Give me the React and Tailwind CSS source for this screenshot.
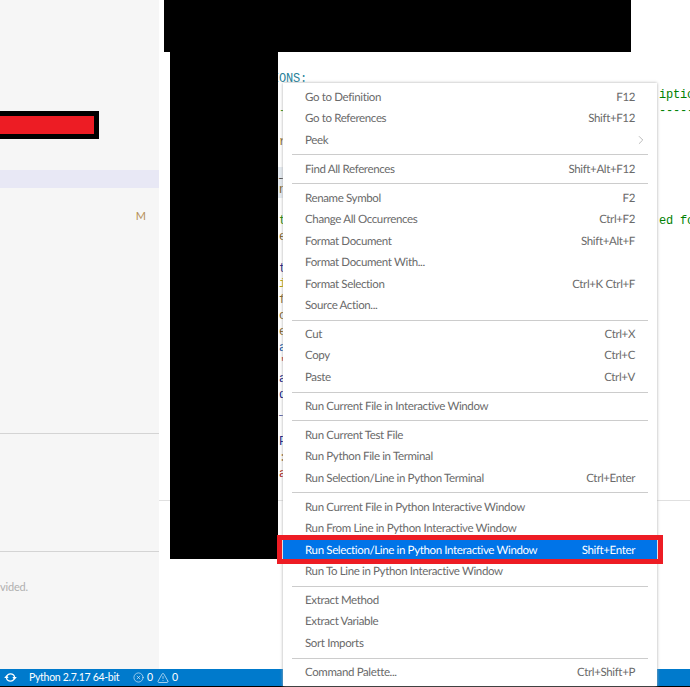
import { ChevronRight, CircleX, TriangleAlert } from 'lucide-react';

const menuGroups = [
  [
    { label: 'Go to Definition', keys: 'F12' },
    { label: 'Go to References', keys: 'Shift+F12' },
    { label: 'Peek', submenu: true },
  ],
  [{ label: 'Find All References', keys: 'Shift+Alt+F12' }],
  [
    { label: 'Rename Symbol', keys: 'F2' },
    { label: 'Change All Occurrences', keys: 'Ctrl+F2' },
    { label: 'Format Document', keys: 'Shift+Alt+F' },
    { label: 'Format Document With...' },
    { label: 'Format Selection', keys: 'Ctrl+K Ctrl+F' },
    { label: 'Source Action...' },
  ],
  [
    { label: 'Cut', keys: 'Ctrl+X' },
    { label: 'Copy', keys: 'Ctrl+C' },
    { label: 'Paste', keys: 'Ctrl+V' },
  ],
  [{ label: 'Run Current File in Interactive Window' }],
  [
    { label: 'Run Current Test File' },
    { label: 'Run Python File in Terminal' },
    { label: 'Run Selection/Line in Python Terminal', keys: 'Ctrl+Enter' },
  ],
  [
    { label: 'Run Current File in Python Interactive Window' },
    { label: 'Run From Line in Python Interactive Window' },
    { label: 'Run Selection/Line in Python Interactive Window', keys: 'Shift+Enter', active: true },
    { label: 'Run To Line in Python Interactive Window' },
  ],
  [
    { label: 'Extract Method' },
    { label: 'Extract Variable' },
    { label: 'Sort Imports' },
  ],
  [{ label: 'Command Palette...', keys: 'Ctrl+Shift+P' }],
];

// what is left visible of the code beside the menu, one entry per editor line
const codeLines = [
  { left: 'IONS:', color: 'text-[#267f99]' },
  { right: 'iption', rightColor: 'text-[#008000]' },
  { left: ' -', color: 'text-[#008000]', right: '------', rightColor: 'text-[#008000]' },
  {},
  { left: ' r', color: 'text-[#795e26]' },
  {},
  { left: ' _', color: 'text-black', selected: true },
  { left: ' ne', color: 'text-[#795e26]', selected: true },
  {},
  { left: ' t', color: 'text-[#008000]', right: 'ed fo', rightColor: 'text-[#008000]' },
  { left: ' e', color: 'text-[#795e26]' },
  {},
  { left: ' t', color: 'text-[#001080]' },
  { left: ' i', color: 'text-[#b5a000]' },
  { left: ' f', color: 'text-[#795e26]' },
  { left: ' c', color: 'text-[#795e26]' },
  { left: ' e', color: 'text-[#795e26]' },
  { left: ' a', color: 'text-[#0451a5]' },
  { left: " '", color: 'text-[#a31515]' },
  { left: ' a', color: 'text-[#001080]' },
  { left: ' d', color: 'text-[#001080]' },
  { left: ' _', color: 'text-[#001080]' },
  {},
  { left: ' F', color: 'text-[#001080]' },
  { left: ' :', color: 'text-[#795e26]' },
  { left: ' a', color: 'text-[#a31515]' },
];

function SyncIcon() {
  return (
    <svg className="h-[13px] w-[13px]" viewBox="0 0 16 16" fill="none" stroke="currentColor" strokeWidth="1.5">
      <path d="M3.2 7.5A5 5 0 0 1 13 7.5" />
      <path d="M12.8 8.5A5 5 0 0 1 3 8.5" />
      <path d="M10.2 7.5h5.6L13 10.8z" fill="currentColor" stroke="none" />
      <path d="M0.2 8.5h5.6L3 5.2z" fill="currentColor" stroke="none" />
    </svg>
  );
}

function MenuRow({ item }) {
  return (
    <div
      className={`flex h-[21.5px] items-center justify-between whitespace-nowrap px-[22px] text-[11.5px] tracking-[-0.36px] [text-rendering:geometricPrecision] ${
        item.active ? 'bg-[#0074e8] text-white' : 'text-[#6a6a6a]'
      }`}
    >
      <span>{item.label}</span>
      {item.keys && <span>{item.keys}</span>}
      {item.submenu && <ChevronRight className="-mr-[13px] h-[14px] w-[14px] text-[#8a8a8a]" strokeWidth={1} />}
    </div>
  );
}

function ContextMenu() {
  return (
    <div className="absolute left-[283px] top-[83px] h-[603px] w-[374px] bg-white pt-[3.7px] font-['Lato',sans-serif] shadow-[0_0_3px_#aaaaaa]">
      {menuGroups.map((group, i) => (
        <div key={i}>
          {i > 0 && <div className="mx-[9px] my-[3.2px] h-px bg-[#cccccc]" />}
          {group.map((item) => (
            <MenuRow key={item.label} item={item} />
          ))}
        </div>
      ))}
    </div>
  );
}

export default function App() {
  return (
    <div className="relative flex h-[687px] w-[690px] flex-col overflow-hidden bg-white">
      <div className="flex min-h-0 flex-1">
        {/* Sidebar */}
        <aside className="flex w-[159px] shrink-0 flex-col bg-[#f6f6f6]">
          <div className="mt-[170px] h-[18px] bg-[#e8e8f5]" />
          <div className="mt-[21px] flex justify-end pr-[13px] font-['Lato',sans-serif] text-[11px] leading-[14px] text-[#b58f57]">
            M
          </div>
          <div className="mt-[210px] h-px bg-[#d4d4d4]" />
          <div className="mt-[117px] h-px bg-[#d4d4d4]" />
          <div className="mt-[27px] font-['Lato',sans-serif] text-[11px] leading-[16px] tracking-[-0.2px] text-[#b0b0b0]">vided.</div>
        </aside>

        {/* Editor */}
        <main className="flex min-w-0 flex-1 flex-col">
          <div className="h-[500px] shrink-0 overflow-hidden pt-[72px] font-['Liberation_Mono',monospace] text-[12px] tracking-[-0.2px]">
            {codeLines.map((line, i) => (
              <div key={i} className="flex h-[15.8px] items-center justify-between leading-[15.8px]">
                <span className={`ml-[113px] w-[38px] overflow-hidden whitespace-pre ${line.selected ? 'bg-[#e5ebf1]' : ''} ${line.color || ''}`}>
                  {line.left}
                </span>
                <span className={`w-[31px] overflow-hidden whitespace-pre ${line.rightColor || ''}`}>{line.right}</span>
              </div>
            ))}
          </div>
          <div className="flex-1 border-t border-[#e0e0e0]" />
        </main>
      </div>

      {/* Status bar */}
      <footer className="flex h-[17px] shrink-0 items-center bg-[#007acc] pl-[4px] font-['Lato',sans-serif] text-[10.5px] tracking-[-0.3px] text-white">
        <SyncIcon />
        <span className="ml-[12px]">Python 2.7.17 64-bit</span>
        <CircleX className="ml-[14px] h-[11px] w-[11px]" strokeWidth={1.25} />
        <span className="ml-[3px]">0</span>
        <TriangleAlert className="ml-[4px] h-[12px] w-[12px]" strokeWidth={1.25} />
        <span className="ml-[3px]">0</span>
      </footer>
      <div className="h-px shrink-0 bg-black" />

      {/* Redactions and annotations drawn over the screenshot */}
      <div className="absolute left-[164px] top-0 h-[52px] w-[467px] bg-black" />
      <div className="absolute left-[170px] top-[52px] h-[507px] w-[108px] bg-black" />
      <div className="absolute left-0 top-[111px] h-[28px] w-[99px] border-[5px] border-l-0 border-black bg-[#ed1c24]" />

      <ContextMenu />

      <div className="absolute left-[277px] top-[535px] h-[29px] w-[386px] border-[5px] border-[#ed1c24]" />
    </div>
  );
}
